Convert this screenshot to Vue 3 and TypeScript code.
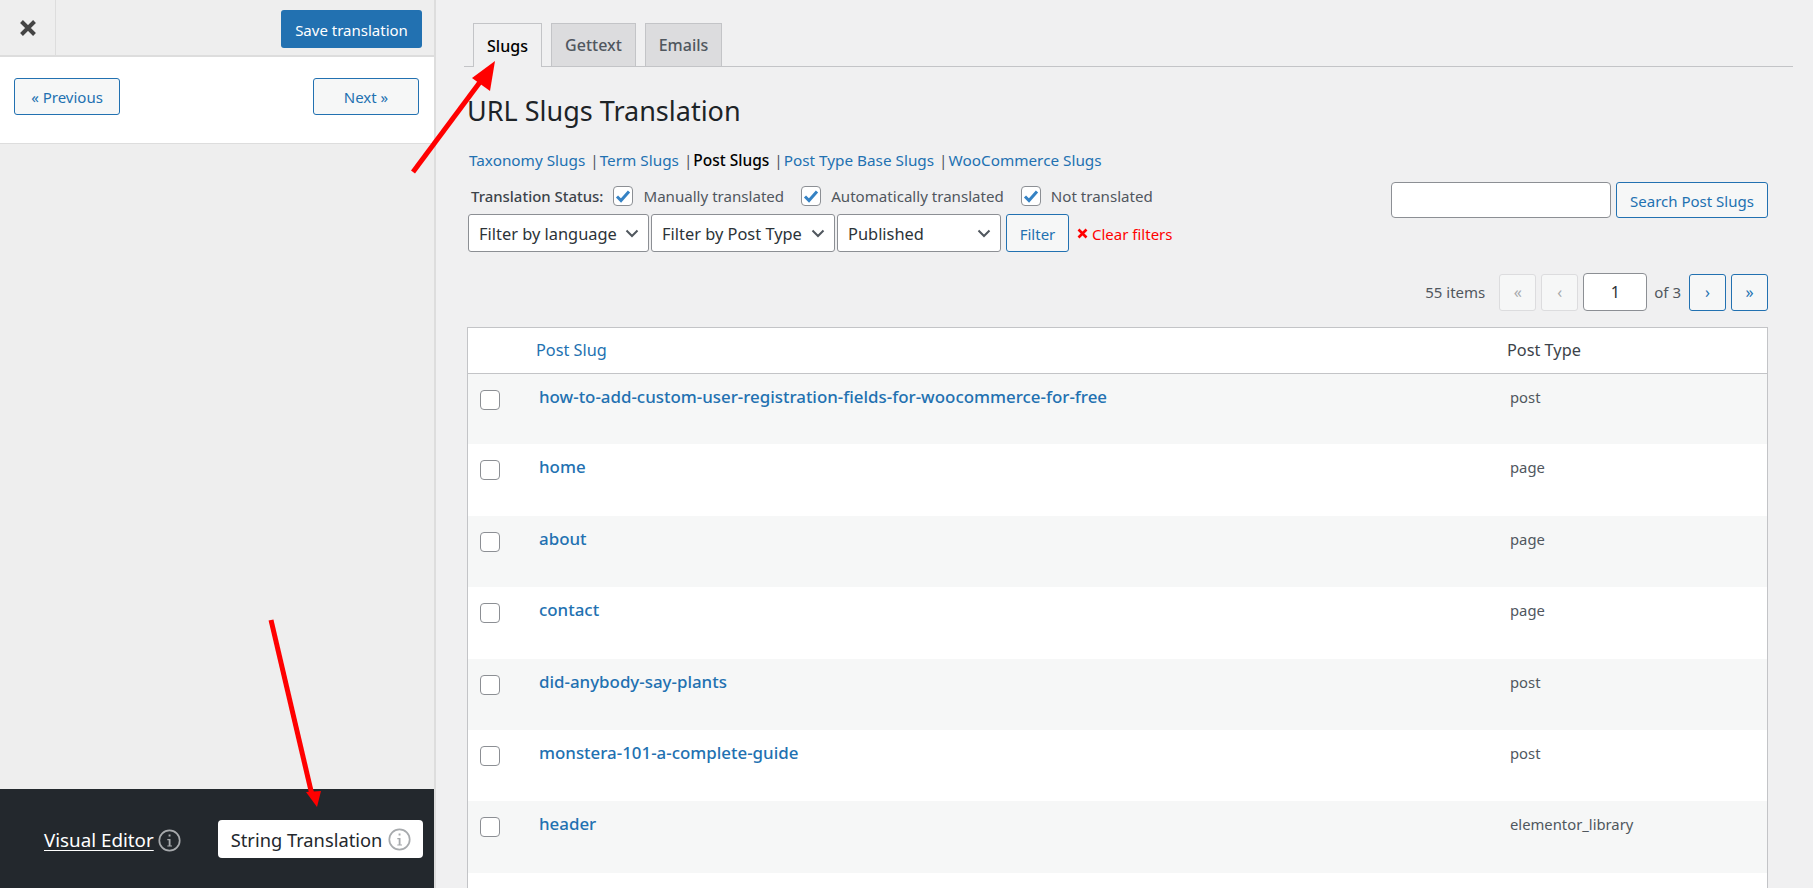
<script setup lang="ts">
const slugs = [
  { slug: 'how-to-add-custom-user-registration-fields-for-woocommerce-for-free', type: 'post' },
  { slug: 'home', type: 'page' },
  { slug: 'about', type: 'page' },
  { slug: 'contact', type: 'page' },
  { slug: 'did-anybody-say-plants', type: 'post' },
  { slug: 'monstera-101-a-complete-guide', type: 'post' },
  { slug: 'header', type: 'elementor_library' },
]
const statuses = ['Manually translated', 'Automatically translated', 'Not translated']
const selects = [
  { label: 'Filter by language', cls: 's1' },
  { label: 'Filter by Post Type', cls: 's2' },
  { label: 'Published', cls: 's3' },
]
const subnav = [
  { label: 'Taxonomy Slugs', current: false },
  { label: 'Term Slugs', current: false },
  { label: 'Post Slugs', current: true },
  { label: 'Post Type Base Slugs', current: false },
  { label: 'WooCommerce Slugs', current: false },
]
</script>

<template>
  <div class="page">
    <aside class="side">
      <div class="side-top">
        <div class="close">
          <svg width="18" height="18" viewBox="0 0 18 18"><path d="M2.5 2.5 15.5 15.5M15.5 2.5 2.5 15.5" stroke="#444" stroke-width="4" fill="none" /></svg>
        </div>
        <button class="save">Save translation</button>
      </div>
      <div class="side-nav">
        <button class="btn prevnext">« Previous</button>
        <button class="btn prevnext">Next »</button>
      </div>
      <div class="side-space"></div>
      <div class="side-foot">
        <a class="visual">Visual Editor</a>
        <svg class="info vi" width="23" height="23" viewBox="0 0 23 23"><circle cx="11.5" cy="11.5" r="10.2" fill="none" stroke="#a7aaad" stroke-width="1.7" /><path d="M9.3 10h3.2v6.4h1.5v1.2H9.3v-1.2h1.4v-5.2H9.3zM10.6 5.4h1.9v2.2h-1.9z" fill="#a7aaad" /></svg>
        <div class="string">
          <span>String Translation</span>
          <svg class="info" width="23" height="23" viewBox="0 0 23 23"><circle cx="11.5" cy="11.5" r="10.2" fill="none" stroke="#a7aaad" stroke-width="1.7" /><path d="M9.3 10h3.2v6.4h1.5v1.2H9.3v-1.2h1.4v-5.2H9.3zM10.6 5.4h1.9v2.2h-1.9z" fill="#a7aaad" /></svg>
        </div>
      </div>
    </aside>

    <main class="main">
      <nav class="tabs">
        <a class="tab active">Slugs</a>
        <a class="tab">Gettext</a>
        <a class="tab">Emails</a>
      </nav>
      <h1>URL Slugs Translation</h1>
      <ul class="subnav">
        <li v-for="(s, i) in subnav" :key="s.label">
          <span v-if="i > 0" class="sep">|</span><a :class="{ current: s.current }">{{ s.label }}</a>
        </li>
      </ul>
      <div class="filters">
        <div class="filter-left">
          <div class="status">
            <strong>Translation Status:</strong>
            <label v-for="s in statuses" :key="s">
              <span class="check">
                <svg width="16" height="14" viewBox="0 0 16 14"><path d="M2 7.5 6 11.5 14 2.5" fill="none" stroke="#3582c4" stroke-width="3" /></svg>
              </span>{{ s }}
            </label>
          </div>
          <div class="selects">
            <div v-for="s in selects" :key="s.label" class="select" :class="s.cls">
              <span>{{ s.label }}</span>
              <svg width="14" height="9" viewBox="0 0 14 9"><path d="M1.5 1.5 7 7l5.5-5.5" fill="none" stroke="#50575e" stroke-width="2" /></svg>
            </div>
            <button class="btn filter">Filter</button>
            <a class="clear"><svg width="11" height="11" viewBox="0 0 11 11"><path d="M1.5 1.5 9.5 9.5M9.5 1.5 1.5 9.5" stroke="#f00" stroke-width="2.6" /></svg>Clear filters</a>
          </div>
        </div>
        <div class="search">
          <div class="input"></div>
          <button class="btn searchbtn">Search Post Slugs</button>
        </div>
      </div>
      <div class="pager">
        <span class="items">55 items</span>
        <span class="pg disabled">«</span>
        <span class="pg disabled">‹</span>
        <span class="pginput">1</span>
        <span class="of">of 3</span>
        <span class="pg">›</span>
        <span class="pg">»</span>
      </div>
      <div class="table-wrap">
        <table>
          <thead>
            <tr>
              <th class="c1"></th>
              <th class="c2"><a>Post Slug</a></th>
              <th class="c3">Post Type</th>
            </tr>
          </thead>
          <tbody>
            <tr v-for="r in slugs" :key="r.slug">
              <td class="c1"><span class="box"></span></td>
              <td class="c2"><a>{{ r.slug }}</a></td>
              <td class="c3">{{ r.type }}</td>
            </tr>
            <tr>
              <td class="c1"></td>
              <td class="c2"></td>
              <td class="c3"></td>
            </tr>
          </tbody>
        </table>
      </div>
    </main>

    <svg class="arrows" width="1813" height="888" viewBox="0 0 1813 888">
      <path d="M413 172 483 78" stroke="#f00" stroke-width="5" fill="none" />
      <path d="M495 61 472 78 490 91z" fill="#f00" />
      <path d="M271 620 312 795" stroke="#f00" stroke-width="5" fill="none" />
      <path d="M317 807 306 792 321 791z" fill="#f00" />
    </svg>
  </div>
</template>

<style>
html, body { margin: 0; background: #f0f0f1; overflow: hidden; }
</style>

<style scoped>
.page {
  position: relative;
  display: flex;
  height: 888px;
  overflow: hidden;
  font-family: "Noto Sans", "Open Sans", sans-serif;
  font-size: 15px;
  color: #3c434a;
  background: #f0f0f1;
}
button { font-family: inherit; cursor: pointer; }

.side {
  width: 436px;
  box-sizing: border-box;
  flex: none;
  display: flex;
  flex-direction: column;
  background: #eee;
  border-right: 2px solid #ddd;
}
.side-top {
  height: 57px;
  box-sizing: border-box;
  display: flex;
  align-items: stretch;
  justify-content: space-between;
  border-bottom: 2px solid #ddd;
  padding-right: 12px;
  flex: none;
}
.close {
  width: 56px;
  box-sizing: border-box;
  border-right: 1px solid #ddd;
  display: flex;
  align-items: center;
  justify-content: center;
}
.save {
  align-self: flex-start;
  margin-top: 10px;
  width: 141px;
  height: 38px;
  background: #2271b1;
  color: #fff;
  border: 0;
  border-radius: 3px;
  font-size: 15px;
  padding: 1px 0 0;
}
.side-nav {
  height: 87px;
  box-sizing: border-box;
  background: #fff;
  border-bottom: 1px solid #ddd;
  display: flex;
  justify-content: space-between;
  align-items: flex-start;
  padding: 21px 15px 0 14px;
  flex: none;
}
.btn {
  background: #f6f7f7;
  border: 1px solid #2271b1;
  border-radius: 3px;
  color: #2271b1;
  font-size: 15px;
  padding: 0;
}
.prevnext { width: 106px; height: 37px; }
.side-space { flex: 1; }
.side-foot {
  height: 99px;
  box-sizing: border-box;
  background: #23282d;
  display: flex;
  align-items: flex-start;
  padding-left: 44px;
  flex: none;
}
.visual {
  color: #fff;
  font-size: 18.8px;
  line-height: 24px;
  margin-top: 39px;
  text-decoration: underline;
  text-underline-offset: 3px;
}
.info.vi { margin: 40px 0 0 4px; }
.string {
  margin: 31px 0 0 37px;
  width: 205px;
  height: 38px;
  box-sizing: border-box;
  background: #fff;
  border-radius: 4px;
  display: flex;
  align-items: center;
  padding-left: 13px;
  gap: 6px;
  font-size: 18.3px;
  color: #23282d;
}

.main {
  flex: 1;
  min-width: 0;
  padding: 23px 45px 0 31px;
  box-sizing: border-box;
}
.tabs {
  display: flex;
  align-items: flex-start;
  height: 44px;
  box-sizing: border-box;
  margin-left: -3px;
  padding-left: 9px;
  margin-right: -25px;
  border-bottom: 1px solid #c3c4c7;
  gap: 9px;
}
.tab {
  height: 43px;
  box-sizing: border-box;
  display: flex;
  align-items: center;
  justify-content: center;
  background: #dcdcde;
  border: 1px solid #c3c4c7;
  border-bottom: 0;
  font-size: 16px;
  font-weight: 500;
  color: #50575e;
  flex: none;
}
.tab:nth-child(1) { width: 69px; }
.tab:nth-child(2) { width: 85px; }
.tab:nth-child(3) { width: 77px; }
.tab.active {
  height: 44px;
  background: #f0f0f1;
  color: #000;
}
h1 {
  margin: 23px 0 0;
  font-size: 27px;
  line-height: 42px;
  font-weight: 400;
  color: #1d2327;
}
.subnav {
  list-style: none;
  display: flex;
  margin: 16px 0 0 2px;
  padding: 0;
  font-size: 15.3px;
  line-height: 24px;
  white-space: nowrap;
}
.subnav a { color: #2271b1; }
.subnav a.current { color: #000; font-weight: 500; font-size: 15.5px; }
.sep { margin: 0 1px 0 5px; color: #50575e; }
.filters {
  display: flex;
  justify-content: space-between;
  align-items: flex-start;
  margin-top: 10px;
}
.status {
  display: flex;
  align-items: center;
  height: 26px;
  margin: 1px 0 0 4px;
  font-size: 15.1px;
  color: #50575e;
}
.status strong { font-weight: 500; font-size: 14.95px; margin-right: 10px; color: #3c434a; }
.status label { display: flex; align-items: center; margin-right: 17px; }
.check {
  width: 20px;
  height: 20px;
  box-sizing: border-box;
  background: #fff;
  border: 1px solid #8c8f94;
  border-radius: 4px;
  display: flex;
  align-items: center;
  justify-content: center;
  margin-right: 10px;
}
.selects { display: flex; align-items: center; margin: 5px 0 0 1px; }
.select {
  height: 38px;
  box-sizing: border-box;
  background: #fff;
  border: 1px solid #8c8f94;
  border-radius: 3px;
  display: flex;
  align-items: center;
  justify-content: space-between;
  padding: 1px 9px 0 10px;
  font-size: 16.4px;
  color: #2c3338;
  margin-right: 2px;
  white-space: nowrap;
}
.s1 { width: 181px; }
.s2 { width: 184px; }
.s3 { width: 164px; margin-right: 5px; }
.filter { width: 63px; height: 38px; padding-top: 1px; }
.clear { display: flex; align-items: center; gap: 4px; color: #f00; margin-left: 8px; padding-top: 1px; font-size: 15px; }
.search { display: flex; gap: 5px; }
.input {
  width: 220px;
  height: 36px;
  box-sizing: border-box;
  background: #fff;
  border: 1px solid #8c8f94;
  border-radius: 4px;
}
.searchbtn { width: 152px; height: 36px; padding-top: 1px; }
.pager {
  display: flex;
  justify-content: flex-end;
  align-items: center;
  margin-top: 21px;
  height: 38px;
}
.items { margin-right: 14px; color: #50575e; }
.pg {
  width: 37px;
  height: 37px;
  box-sizing: border-box;
  background: #f6f7f7;
  border: 1px solid #2271b1;
  border-radius: 3px;
  color: #2271b1;
  display: flex;
  align-items: center;
  justify-content: center;
  margin-left: 5px;
  font-size: 16px;
}
.items + .pg { margin-left: 0; }
.pg.disabled { border-color: #dcdcde; color: #a7aaad; }
.pginput {
  width: 64px;
  height: 38px;
  box-sizing: border-box;
  background: #fff;
  border: 1px solid #8c8f94;
  border-radius: 4px;
  display: flex;
  align-items: center;
  justify-content: center;
  margin-left: 5px;
  color: #2c3338;
  font-size: 16px;
}
.of { margin: 0 3px 0 7px; color: #50575e; }
.table-wrap {
  margin-top: 16px;
  border: 1px solid #c3c4c7;
  border-bottom: 0;
  background: #fff;
}
table { width: 100%; border-collapse: collapse; table-layout: fixed; }
th {
  height: 45px;
  box-sizing: border-box;
  padding: 0;
  text-align: left;
  font-weight: 400;
  border-bottom: 1px solid #c3c4c7;
  font-size: 16.3px;
}
th a { color: #2271b1; }
.c1 { width: 68px; }
td {
  height: 71.4px;
  padding: 0;
  vertical-align: top;
  box-sizing: border-box;
}
tbody tr:nth-child(odd) { background: #f6f7f7; }
.box {
  display: block;
  width: 20px;
  height: 20px;
  box-sizing: border-box;
  margin: 16px 0 0 12px;
  background: #fff;
  border: 1px solid #8c8f94;
  border-radius: 4px;
}
td.c2 { padding: 11px 0 0 3px; font-weight: 500; font-size: 16.9px; }
td.c2 a { color: #2271b1; }
td.c3 { padding: 13px 0 0 3px; font-size: 14.8px; color: #50575e; }
.c3 { width: 260px; }
.arrows { position: absolute; left: 0; top: 0; pointer-events: none; }
</style>
